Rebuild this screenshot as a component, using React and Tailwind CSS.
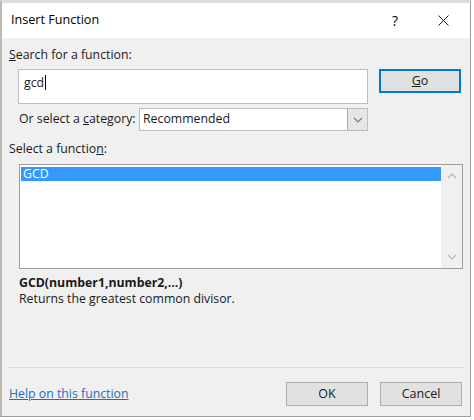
import React from "react";

const Chevron = ({ up = false, className = "" }) => (
  <svg width="10" height="6" viewBox="0 0 10 6" className={className}>
    <path
      d={up ? "M1 5 L5 1 L9 5" : "M1 1 L5 5 L9 1"}
      fill="none"
      stroke="currentColor"
      strokeWidth="1.2"
    />
  </svg>
);

const Button = ({ children, focused = false }) => (
  <button
    className={
      "w-[82px] h-[24px] bg-[#e1e1e1] text-[12.5px] text-[#1a1a1a] flex items-center justify-center " +
      (focused ? "border-2 border-[#0078d7]" : "border border-[#adadad]")
    }
  >
    {children}
  </button>
);

export default function App() {
  return (
    <div
      className="w-[474px] h-[420px] bg-white text-[12.3px] text-[#1a1a1a]"
      style={{ fontFamily: '"Open Sans", "Noto Sans", sans-serif' }}
    >
      <div className="w-[471px] h-[417px] flex flex-col bg-[#f0f0f0] border-t-[3px] border-l-2 border-r border-b border-t-[#dcdcdc] border-l-[#c2b8ad] border-r-[#9d9d9d] border-b-[#9d9d9d]">
        {/* title bar */}
        <div className="h-[35px] bg-white flex items-center pl-[9px] shrink-0">
          <span className="text-[12.6px] text-black">Insert Function</span>
          <span className="ml-auto mr-[40px] text-[14px] text-black">?</span>
          <svg width="11" height="11" viewBox="0 0 11 11" className="mr-[21px]">
            <path d="M0.5 0.5 L10.5 10.5 M10.5 0.5 L0.5 10.5" stroke="#222" strokeWidth="1" />
          </svg>
        </div>

        {/* body */}
        <div className="flex-1 flex flex-col pl-[7px]">
          <div className="mt-[9px] h-[16px] leading-[16px]">
            <u>S</u>earch for a function:
          </div>

          <div className="mt-[6px] flex items-start">
            <div className="ml-[9px] w-[350px] h-[35px] bg-white border border-[#bdbdbd] px-[5px] pt-[5px] leading-[16px] flex items-start">
              <span>gcd</span>
              <span className="w-px h-[15px] bg-black ml-px" />
            </div>
            <div className="ml-[11px]">
              <Button focused>
                <u>G</u>o
              </Button>
            </div>
          </div>

          <div className="mt-[4px] flex items-center h-[23px]">
            <span className="ml-[10px] w-[120px] whitespace-nowrap">
              Or select a <u>c</u>ategory:
            </span>
            <div className="w-[229px] h-[23px] bg-white border border-[#bdbdbd] flex items-center">
              <span className="pl-[3px] flex-1">Recommended</span>
              <div className="w-[20px] h-full bg-[#e6e6e6] border-l border-[#adadad] flex items-center justify-center text-[#7a7a7a]">
                <Chevron />
              </div>
            </div>
          </div>

          <div className="mt-[10px] h-[16px] leading-[16px]">
            Select a functio<u>n</u>:
          </div>

          <div className="mt-[7px] ml-[10px] w-[444px] h-[105px] bg-white border border-[#9e9e9e] flex">
            <div className="flex-1 pt-[2px] pl-px">
              <div className="h-[14px] bg-[#3399ff] text-white leading-[14px] pl-[2px]">GCD</div>
            </div>
            <div className="w-[21px] bg-[#f0f0f0] flex flex-col items-center justify-between py-[8px] text-[#b5b5b5]">
              <Chevron up />
              <Chevron />
            </div>
          </div>

          <div className="mt-[6px] ml-[10px] font-bold h-[16px] leading-[16px]">
            GCD(number1,number2,...)
          </div>
          <div className="ml-[10px] h-[16px] leading-[16px]">
            Returns the greatest common divisor.
          </div>

          <div className="mt-auto ml-[-1px] w-[456px] h-px bg-[#dadada]" />

          <div className="h-[48px] flex items-start pt-[14px] pr-[8px]">
            <span className="text-[#1a6fc4] underline mt-[3px]">Help on this function</span>
            <div className="ml-auto flex gap-[12px]">
              <Button>OK</Button>
              <Button>Cancel</Button>
            </div>
          </div>
        </div>
      </div>
    </div>
  );
}
